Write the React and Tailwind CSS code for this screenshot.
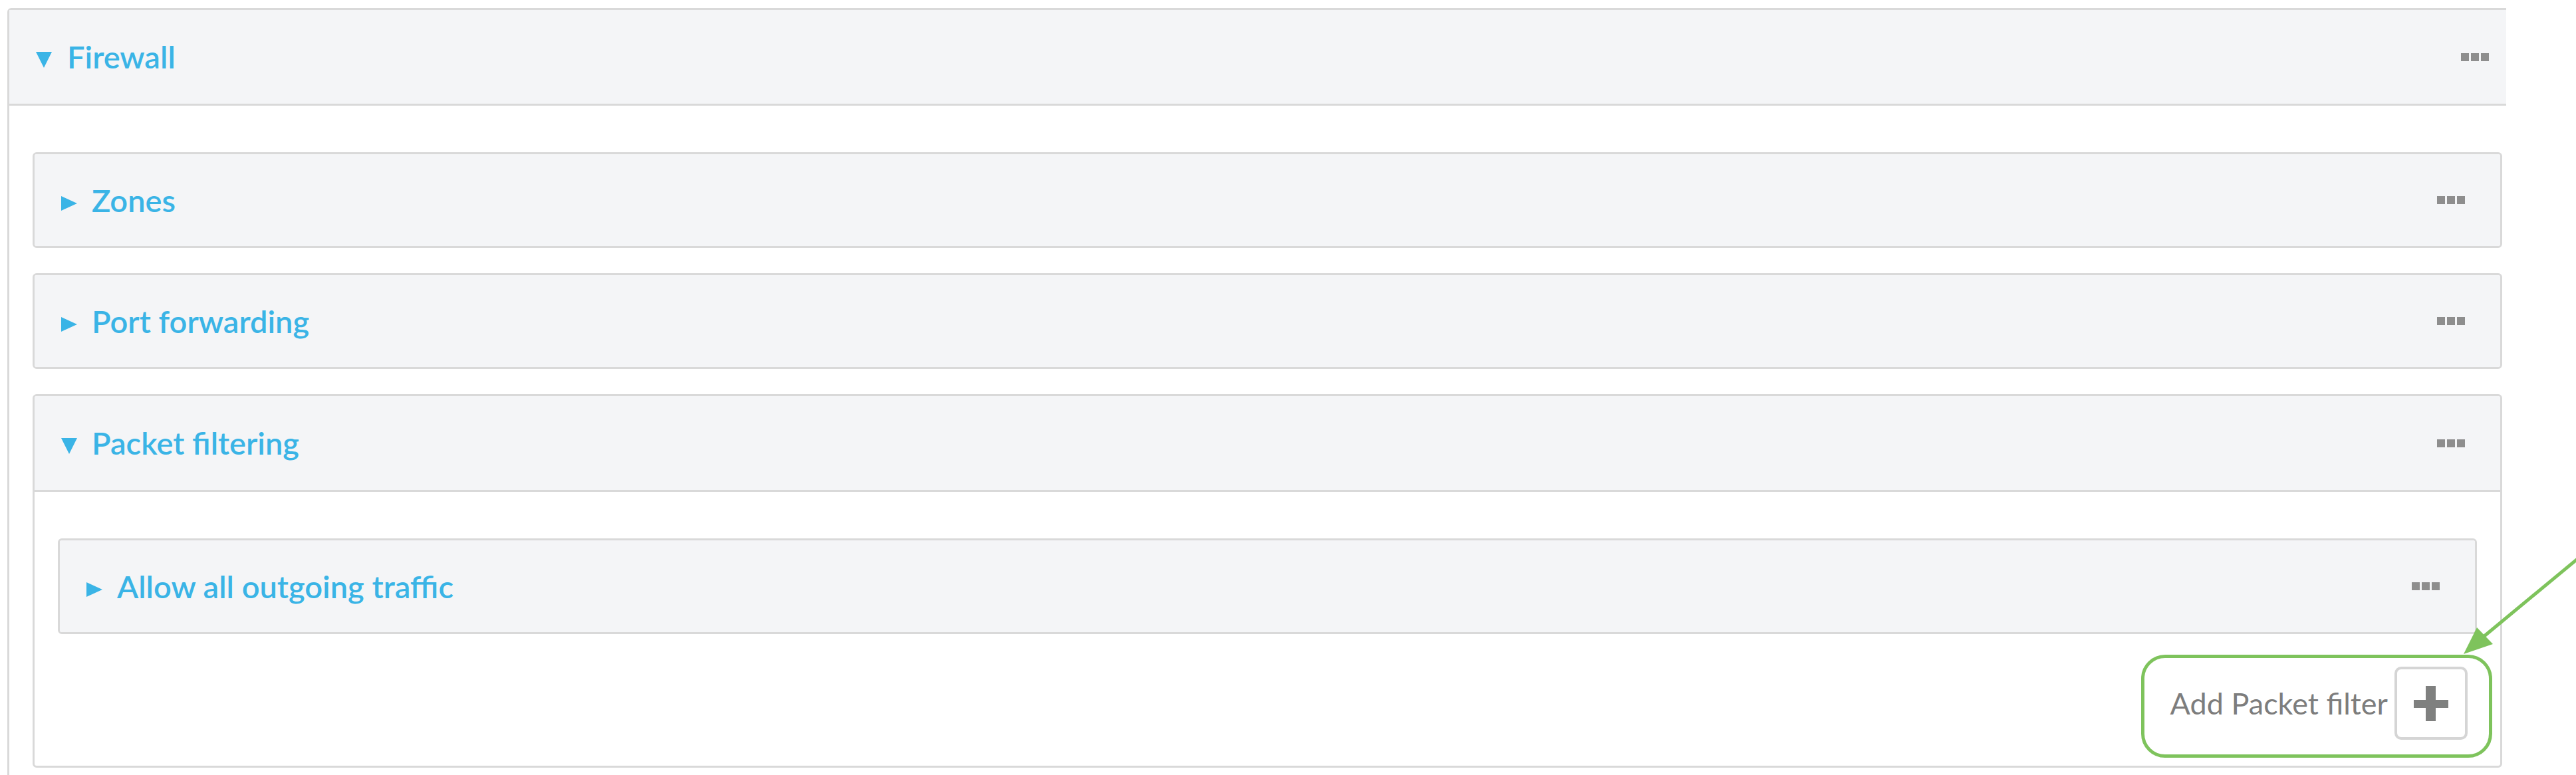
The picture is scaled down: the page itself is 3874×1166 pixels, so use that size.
import React from "react";

const blue = "text-[#3ab4e6]";

function Dots() {
  return (
    <div className="flex gap-[3px]">
      <span className="h-[12px] w-[12px] bg-[#8e8e8e]" />
      <span className="h-[12px] w-[12px] bg-[#8e8e8e]" />
      <span className="h-[12px] w-[12px] bg-[#8e8e8e]" />
    </div>
  );
}

function Caret({ open }) {
  if (open) {
    return (
      <svg width="24" height="24" viewBox="0 0 24 24" className="mt-[8px] shrink-0">
        <polygon points="0,0 24,0 12,24" fill="#3ab4e6" />
      </svg>
    );
  }
  return (
    <svg width="24" height="22" viewBox="0 0 24 22" className="mt-[10px] shrink-0">
      <polygon points="0,0 24,11 0,22" fill="#3ab4e6" />
    </svg>
  );
}

function PanelHeader({ title, open, bordered }) {
  return (
    <div
      className={`flex items-center justify-between bg-[#f4f5f7] pl-[40px] pr-[53px] ${
        bordered ? "h-[144px] border-b-[3px] border-[#d9d9d9]" : "h-[138px]"
      }`}
    >
      <div className="flex items-center gap-[22px]">
        <Caret open={open} />
        <span className={`text-[47px] font-semibold leading-none ${blue}`}>{title}</span>
      </div>
      <Dots />
    </div>
  );
}

function Collapsed({ title }) {
  return (
    <div className="overflow-hidden rounded-[6px] border-[3px] border-[#d9d9d9]">
      <PanelHeader title={title} />
    </div>
  );
}

function Plus() {
  return (
    <svg width="52" height="53" viewBox="0 0 52 53">
      <rect x="18" y="0" width="15" height="53" fill="#7f807f" />
      <rect x="0" y="21" width="52" height="12" fill="#7f807f" />
    </svg>
  );
}

export default function App() {
  return (
    <div className="relative h-[1166px] w-[3874px] overflow-hidden bg-white font-['Lato','Noto_Sans',sans-serif]">
      <div className="pl-[11px] pt-[12px]">
        <div className="w-[3758px] overflow-hidden">
          <div className="w-[3790px] rounded-tl-[6px] border-[3px] border-[#d9d9d9] bg-white">
            <div className="flex h-[144px] items-center justify-between border-b-[3px] border-[#d9d9d9] bg-[#f4f5f7] pl-[40px] pr-[55px]">
              <div className="flex items-center gap-[23px]">
                <Caret open />
                <span className={`text-[47px] font-semibold leading-none ${blue}`}>Firewall</span>
              </div>
              <Dots />
            </div>

            <div className="flex flex-col gap-[38px] px-[35px] pb-[60px] pt-[70px]">
              <Collapsed title="Zones" />
              <Collapsed title="Port forwarding" />

              <div className="overflow-hidden rounded-[6px] border-[3px] border-[#d9d9d9]">
                <PanelHeader title="Packet filtering" open bordered />
                <div className="px-[35px] pb-[39px] pt-[70px]">
                  <Collapsed title="Allow all outgoing traffic" />
                  <div className="mt-[49px] flex items-center justify-end gap-[10px] pr-[14px]">
                    <span className="text-[45px] leading-none text-[#7d7d7d]">Add Packet filter</span>
                    <button className="flex h-[110px] w-[110px] items-center justify-center rounded-[10px] border-[4px] border-[#d5d5d5] bg-white">
                      <Plus />
                    </button>
                  </div>
                </div>
              </div>
            </div>
          </div>
        </div>
      </div>

      <div className="pointer-events-none absolute left-[3220px] top-[985px] h-[155px] w-[528px] rounded-[36px] border-[5px] border-[#7ec35c]" />

      <svg
        className="pointer-events-none absolute left-0 top-0"
        width="3874"
        height="1166"
        viewBox="0 0 3874 1166"
      >
        <line x1="3876" y1="841" x2="3730" y2="962" stroke="#7ec35c" strokeWidth="5" />
        <polygon points="3705,984 3725,944 3749,969" fill="#7ec35c" />
      </svg>
    </div>
  );
}
